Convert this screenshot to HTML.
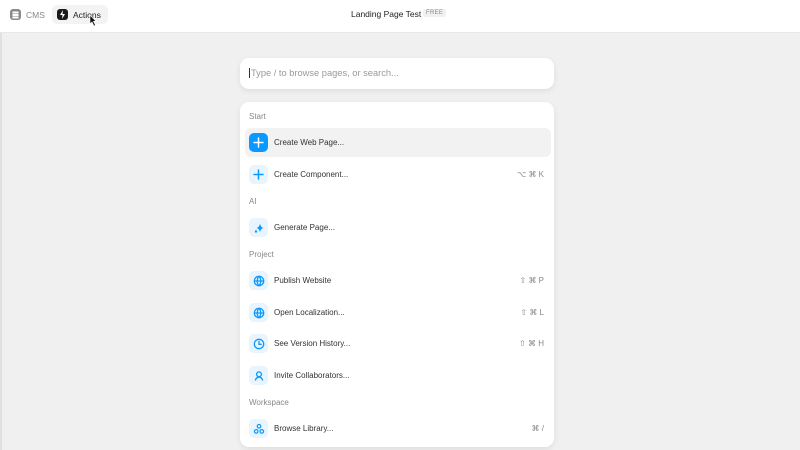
<!DOCTYPE html>
<html><head><meta charset="utf-8"><style>
*{box-sizing:border-box;margin:0;padding:0}
body{width:800px;height:450px;overflow:hidden;background:#f0f0f0;font-family:"Liberation Sans",sans-serif;position:relative}
.top{position:absolute;left:0;top:0;width:800px;height:33px;background:#fff;border-bottom:1px solid #e8e8e8}
.lb{position:absolute;left:0;top:33px;width:2px;height:417px;background:#e0e0e0}
.tab{position:absolute;top:5px;height:19px;display:flex;align-items:center;font-size:8.5px;white-space:nowrap}
.ic{width:11px;height:11px;border-radius:3px;display:flex;align-items:center;justify-content:center}
.title{position:absolute;top:9px;left:351px;font-size:8.5px;color:#222;white-space:nowrap}
.free{position:absolute;top:9px;left:423px;font-size:6px;color:#888;background:#f1f1f1;padding:1px 3px;border-radius:2px;letter-spacing:.3px}
.search{position:absolute;left:240px;top:58px;width:314px;height:31px;background:#fff;border-radius:9px;box-shadow:0 2px 6px rgba(0,0,0,.08);font-size:9.3px;color:#9a9a9a;padding:10px 0 0 9px;white-space:nowrap}
.search span{border-left:1px solid #333;padding-left:1px}
.panel{position:absolute;left:240px;top:102px;width:314px;height:345px;background:#fff;border-radius:9px;box-shadow:0 2px 6px rgba(0,0,0,.08)}
.sec{position:absolute;left:9px;font-size:8px;color:#888}
.row{position:absolute;left:5px;width:306px;height:29px;border-radius:6px;display:flex;align-items:center;padding-left:4px;font-size:8px;color:#333}
.row.sel{background:#f2f2f2}
.ri{width:19px;height:19px;border-radius:5px;background:#e8f4fe;display:flex;align-items:center;justify-content:center;margin-right:6px}
.sc{position:absolute;right:7px;font-size:8px;color:#888}
</style></head><body>
<div class="top"></div><div class="lb"></div>
<div class="tab" style="left:6px;padding:0 4px;color:#888"><div class="ic" style="background:#8a8a8a;margin-right:5px"><svg width="7" height="8" viewBox="0 0 7 8"><rect x="0.5" y="0.5" width="6" height="2" fill="#fff"/><rect x="0.5" y="3" width="6" height="2" fill="#fff"/><rect x="0.5" y="5.5" width="6" height="2" fill="#fff"/></svg></div>CMS</div>
<div class="tab" style="left:52px;padding:0 7px 0 5px;background:#f3f3f3;border-radius:5px;color:#222"><div class="ic" style="background:#1a1a1a;margin-right:5px"><svg width="7" height="9" viewBox="0 0 7 9"><path d="M4 0L1 5h2.5L3 9l3-5H3.5z" fill="#fff"/></svg></div>Actions</div>
<svg style="position:absolute;left:89px;top:15px" width="8" height="11" viewBox="0 0 8 11"><path d="M1 0v9l2-2 2 4 1.5-.7-2-4H7z" fill="#111" stroke="#fff" stroke-width=".6"/></svg>
<div class="title">Landing Page Test</div><div class="free">FREE</div>
<div class="search"><span>Type / to browse pages, or search...</span></div>
<div class="panel">
<div class="sec" style="top:10px">Start</div>
<div class="row sel" style="top:26px"><div class="ri" style="background:#0a99ff"><svg width="11" height="11" viewBox="0 0 11 11"><path d="M5.5 1v9M1 5.5h9" stroke="#fff" stroke-width="1.5" stroke-linecap="round"/></svg></div>Create Web Page...</div>
<div class="row" style="top:58px"><div class="ri"><svg width="11" height="11" viewBox="0 0 11 11"><path d="M5.5 1v9M1 5.5h9" stroke="#0a99ff" stroke-width="1.5" stroke-linecap="round"/></svg></div>Create Component...<span class="sc">⌥ ⌘ K</span></div>
<div class="sec" style="top:95px">AI</div>
<div class="row" style="top:111px"><div class="ri"><svg width="12" height="12" viewBox="0 0 12 12"><path d="M7 1.5Q7.6 5.4 10.5 6 7.6 6.6 7 10.5 6.4 6.6 3.5 6 6.4 5.4 7 1.5z" fill="#0a99ff"/><circle cx="3" cy="9.5" r="1.2" fill="#0a99ff"/></svg></div>Generate Page...</div>
<div class="sec" style="top:148px">Project</div>
<div class="row" style="top:164px"><div class="ri"><svg width="12" height="12" viewBox="0 0 12 12" fill="none" stroke="#0a99ff" stroke-width="1.3"><circle cx="6" cy="6" r="4.7"/><path d="M1.3 6h9.4M6 1.3c-2.4 2.6-2.4 6.8 0 9.4M6 1.3c2.4 2.6 2.4 6.8 0 9.4"/></svg></div>Publish Website<span class="sc">⇧ ⌘ P</span></div>
<div class="row" style="top:196px"><div class="ri"><svg width="12" height="12" viewBox="0 0 12 12" fill="none" stroke="#0a99ff" stroke-width="1.3"><circle cx="6" cy="6" r="4.7"/><path d="M1.3 6h9.4M6 1.3c-2.4 2.6-2.4 6.8 0 9.4M6 1.3c2.4 2.6 2.4 6.8 0 9.4"/></svg></div>Open Localization...<span class="sc">⇧ ⌘ L</span></div>
<div class="row" style="top:227px"><div class="ri"><svg width="12" height="12" viewBox="0 0 12 12" fill="none" stroke="#0a99ff" stroke-width="1.3"><circle cx="6" cy="6" r="4.7"/><path d="M6 3.3V6.3h2.3" stroke-linecap="round"/></svg></div>See Version History...<span class="sc">⇧ ⌘ H</span></div>
<div class="row" style="top:259px"><div class="ri"><svg width="12" height="12" viewBox="0 0 12 12" fill="none" stroke="#0a99ff" stroke-width="1.3"><circle cx="6" cy="4.3" r="2.4"/><path d="M2.3 10.5c.5-2.3 1.8-3.3 3.7-3.3s3.2 1 3.7 3.3"/></svg></div>Invite Collaborators...</div>
<div class="sec" style="top:296px">Workspace</div>
<div class="row" style="top:312px"><div class="ri"><svg width="12" height="12" viewBox="0 0 12 12" fill="none" stroke="#0a99ff" stroke-width="1.2"><circle cx="6" cy="3.3" r="1.8"/><circle cx="3.2" cy="8.4" r="1.8"/><circle cx="8.8" cy="8.4" r="1.8"/></svg></div>Browse Library...<span class="sc">⌘ /</span></div>
</div>
</body></html>
